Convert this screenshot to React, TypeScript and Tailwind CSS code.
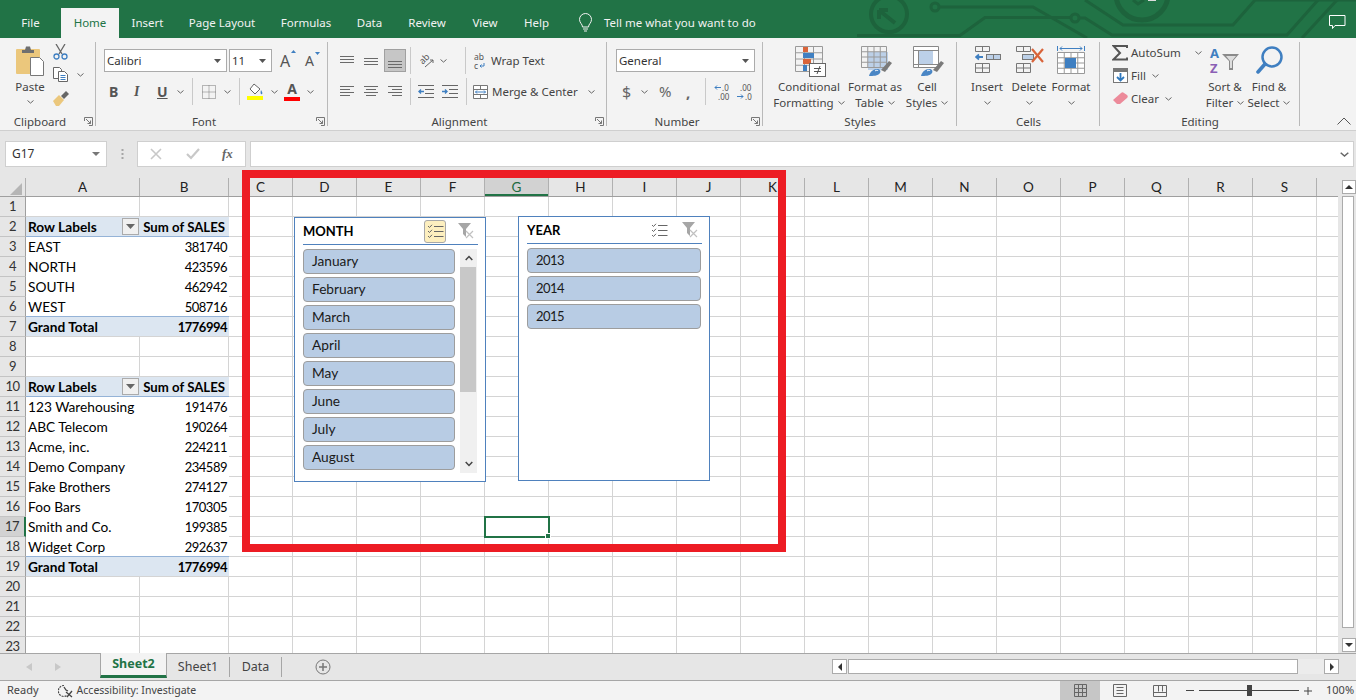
import React from 'react';

const tabs = [
  { label: 'File', w: 'w-[61px]' },
  { label: 'Home', w: 'w-[58px]', active: true },
  { label: 'Insert', w: 'w-[57px]' },
  { label: 'Page Layout', w: 'w-[92px]' },
  { label: 'Formulas', w: 'w-[76px]' },
  { label: 'Data', w: 'w-[51px]' },
  { label: 'Review', w: 'w-[64px]' },
  { label: 'View', w: 'w-[52px]' },
  { label: 'Help', w: 'w-[51px]' },
];

const columns = ['A', 'B', 'C', 'D', 'E', 'F', 'G', 'H', 'I', 'J', 'K', 'L', 'M', 'N', 'O', 'P', 'Q', 'R', 'S', ''];

type PivotRow = { a: string; b: string; kind?: 'head' | 'total' | 'last' | 'body' };

const pivot: Record<number, PivotRow> = {
  2: { a: 'Row Labels', b: 'Sum of SALES', kind: 'head' },
  3: { a: 'EAST', b: '381740' },
  4: { a: 'NORTH', b: '423596' },
  5: { a: 'SOUTH', b: '462942' },
  6: { a: 'WEST', b: '508716', kind: 'last' },
  7: { a: 'Grand Total', b: '1776994', kind: 'total' },
  10: { a: 'Row Labels', b: 'Sum of SALES', kind: 'head' },
  11: { a: '123 Warehousing', b: '191476' },
  12: { a: 'ABC Telecom', b: '190264' },
  13: { a: 'Acme, inc.', b: '224211' },
  14: { a: 'Demo Company', b: '234589' },
  15: { a: 'Fake Brothers', b: '274127' },
  16: { a: 'Foo Bars', b: '170305' },
  17: { a: 'Smith and Co.', b: '199385' },
  18: { a: 'Widget Corp', b: '292637', kind: 'last' },
  19: { a: 'Grand Total', b: '1776994', kind: 'total' },
};

const months = ['January', 'February', 'March', 'April', 'May', 'June', 'July', 'August'];
const years = ['2013', '2014', '2015'];

function colWidth(i: number) {
  if (i === 0) return 'w-[114px]';
  if (i === 1) return 'w-[89px]';
  return 'w-[64px]';
}

function Chev({ className = '' }: { className?: string }) {
  return (
    <svg width="7" height="4" viewBox="0 0 7 4" className={`shrink-0 ${className}`}>
      <path d="M.5.5l3 2.6 3-2.6" fill="none" stroke="#666" />
    </svg>
  );
}

function Launcher() {
  return (
    <svg width="9" height="9" viewBox="0 0 9 9" className="absolute right-[3px] top-[3px]">
      <path d="M.5 4V.5h8v8H5M2 2l4.500 4.500M6.500 3.500v3h-3" fill="none" stroke="#777" />
    </svg>
  );
}

function Group({ w, label, launcher, children }: { w: string; label: string; launcher?: boolean; children: React.ReactNode }) {
  return (
    <div className={`relative flex h-[92px] shrink-0 flex-col ${w}`}>
      <div className="h-[76px]">{children}</div>
      <div className={`relative h-[16px] text-center text-[11.5px] leading-[16px] text-[#444] ${launcher ? 'pr-[16px]' : ''}`}>
        {label}
        {launcher && <Launcher />}
      </div>
      <div className="absolute bottom-[4px] right-0 top-[4px] w-px bg-[#b9b9b9]" />
    </div>
  );
}

function Combo({ w, text, ml }: { w: string; text: string; ml: string }) {
  return (
    <div className={`flex h-[23px] items-center justify-between border border-[#ababab] bg-white pl-[2px] pr-[5px] text-[11.5px] text-[#333] ${w} ${ml}`}>
      <span>{text}</span>
      <svg width="7" height="4" viewBox="0 0 7 4"><path d="M0 0h7L3.500 4z" fill="#555" /></svg>
    </div>
  );
}

function Sep({ ml }: { ml: string }) {
  return <div className={`h-[27px] w-px shrink-0 bg-[#c9c9c9] ${ml}`} />;
}

function Lines({ rows, w = 14, h = 14, ml = '' }: { rows: number[][]; w?: number; h?: number; ml?: string }) {
  return (
    <svg width={w} height={h} viewBox={`0 0 ${w} ${h}`} className={`shrink-0 ${ml}`}>
      {rows.map((r, i) => (
        <path key={i} d={`M${r[0]} ${r[2]}.5H${r[1]}`} stroke="#6a6a6a" />
      ))}
    </svg>
  );
}

function LargeButton({ w, ml = '', lines, chevLine, icon }: { w: string; ml?: string; lines: string[]; chevLine?: boolean; icon: React.ReactNode }) {
  return (
    <div className={`flex shrink-0 flex-col items-center pt-[6px] text-[11.5px] leading-[16px] text-[#444] ${w} ${ml}`}>
      <div className="flex h-[32px] items-start justify-center">{icon}</div>
      <div className="mt-[3px] whitespace-nowrap">{lines[0]}</div>
      <div className="flex h-[16px] items-center gap-[4px] whitespace-nowrap">
        {lines[1] && <span>{lines[1]}</span>}
        {chevLine && <Chev />}
      </div>
    </div>
  );
}

function TableGrid({ x = 0, y = 0, w, h, cols, rows, color = '#777' }: { x?: number; y?: number; w: number; h: number; cols: number; rows: number; color?: string }) {
  const v = Array.from({ length: cols + 1 }, (_, i) => x + (w * i) / cols);
  const r = Array.from({ length: rows + 1 }, (_, i) => y + (h * i) / rows);
  return (
    <g stroke={color} fill="none">
      {v.map((p, i) => <path key={`v${i}`} d={`M${p} ${y}V${y + h}`} />)}
      {r.map((p, i) => <path key={`h${i}`} d={`M${x} ${p}H${x + w}`} />)}
    </g>
  );
}

function Brush() {
  return (
    <g>
      <path d="M20 24l8-9 3 2-7 9z" fill="#7a7a7a" />
      <path d="M8 30c1-4 4-7 8-7 3 0 4 2 3 4-2 3-7 3-11 3z" fill="#4a86c5" />
      <path d="M14 25c1-1 3-1 3 0" stroke="#fff" fill="none" />
    </g>
  );
}

function CheckList({ color = '#666' }: { color?: string }) {
  return (
    <svg width="17" height="15" viewBox="0 0 17 15">
      <path d="M1 2l1.500 1.500L5 .8M1 7l1.500 1.500L5 5.800M1 12l1.500 1.500L5 10.800" fill="none" stroke={color} />
      <path d="M7 2.500h9.500M7 7.500h9.500M7 12.500h9.500" stroke={color} />
    </svg>
  );
}

function FilterClear() {
  return (
    <svg width="17" height="16" viewBox="0 0 17 16">
      <path d="M0 0h13L8 6v8L5 11V6z" fill="#a6a6a6" />
      <path d="M8 8l7 7M15 8l-7 7" stroke="#c0c0c0" strokeWidth="1.200" />
    </svg>
  );
}

function Slicer({ title, items, itemW, top, left, active, scroll, digits }: { title: string; items: string[]; itemW: string; top: string; left: string; active?: boolean; scroll?: boolean; digits?: boolean }) {
  return (
    <div className={`absolute h-[265px] w-[192px] border border-[#4f81bd] bg-white pl-[8px] pr-[7px] ${top} ${left}`}>
      <div className="flex h-[27px] items-center justify-between border-b border-[#4f81bd]">
        <span className="pt-px font-['Lato',sans-serif] text-[13px] font-bold text-black">{title}</span>
        <div className="flex items-center">
          <div className={`flex h-[23px] w-[22px] items-center justify-center rounded-[3px] ${active ? 'border border-[#a8a8a8] bg-[#fdefbf]' : ''}`}>
            <CheckList />
          </div>
          <div className="ml-[12px] mr-[3px]"><FilterClear /></div>
        </div>
      </div>
      <div className="mt-[4px] flex gap-[5px]">
        <div className="flex flex-col gap-[3px]">
          {items.map((m) => (
            <div key={m} className={`flex h-[25px] items-center rounded-[4px] border border-[#9d9d9d] bg-[#b8cce4] pl-[8px] font-['Lato',sans-serif] text-[#1a1a1a] ${itemW} ${digits ? 'text-[13px] tracking-[-0.5px]' : 'text-[13.7px]'}`}>
              {m}
            </div>
          ))}
        </div>
        {scroll && (
          <div className="flex h-[224px] w-[17px] flex-col bg-[#f0f0f0]">
            <div className="flex h-[18px] items-center justify-center">
              <svg width="8" height="6" viewBox="0 0 8 6"><path d="M.7 5L4 1.500 7.300 5" fill="none" stroke="#444" strokeWidth="1.500" /></svg>
            </div>
            <div className="h-[125px] w-[16px] bg-[#c8c8c8]" />
            <div className="flex-1" />
            <div className="flex h-[18px] items-center justify-center">
              <svg width="8" height="6" viewBox="0 0 8 6"><path d="M.7 1L4 4.500 7.300 1" fill="none" stroke="#444" strokeWidth="1.500" /></svg>
            </div>
          </div>
        )}
      </div>
    </div>
  );
}

function Circuit() {
  return (
    <svg width="516" height="38" viewBox="840 0 516 38" className="absolute right-0 top-0">
      <g fill="none" stroke="#1d633c" strokeWidth="3">
        <circle cx="889" cy="14" r="18" strokeWidth="4" />
        <path d="M879 10h9M879 10v9M880 11l15 12" strokeWidth="4" />
        <circle cx="935" cy="7" r="4" />
        <path d="M939 7h94l54 31" />
        <path d="M857 35.500h103l25-18h85" />
        <circle cx="1075" cy="18" r="4" />
        <path d="M1079 18h6l27 17h175l31-35" />
        <path d="M1085 0l38 25h110l22-25h101" />
        <circle cx="1142" cy="-6" r="26" strokeWidth="5" />
        <path d="M1133 0l5 4 6-4" />
        <path d="M1337 0l-35 38" />
      </g>
      <rect x="1148" y="0" width="8" height="1" fill="#ddd" />
    </svg>
  );
}

function Sheet() {
  return (
    <div className="h-[475px] w-[1338px] shrink-0 overflow-hidden bg-white font-['Lato',sans-serif] text-[13.7px] text-black">
      <div className="flex h-[19px] border-b border-[#9f9f9f] bg-[#e6e6e6] text-[13.5px] text-[#222]">
        <div className="flex h-[18px] w-[26px] shrink-0 items-end justify-end border-r border-[#b0b0b0] pb-[1px] pr-[3px]">
          <svg width="12" height="12" viewBox="0 0 12 12"><path d="M12 0v12H0z" fill="#b5b5b5" /></svg>
        </div>
        {columns.map((c, i) => (
          <div
            key={i}
            className={`flex h-[18px] shrink-0 items-center justify-center border-r border-[#b0b0b0] leading-[18px] ${colWidth(i)} ${c === 'G' ? 'bg-[#d2d2d2] text-[#1d6a3f] shadow-[inset_0_-2px_0_#217346]' : ''}`}
          >
            {c}
          </div>
        ))}
      </div>
      {Array.from({ length: 23 }, (_, r) => {
        const n = r + 1;
        const p = pivot[n];
        const shaded = p?.kind === 'head' || p?.kind === 'total';
        const underline = p?.kind === 'head' || p?.kind === 'last';
        const bottom = underline ? 'border-b-[#95b3d7]' : p && !shaded ? 'border-b-white' : 'border-b-[#d4d4d4]';
        return (
          <div key={n} className="flex h-[20px]">
            <div className={`flex w-[26px] shrink-0 items-center justify-center border-b border-r border-b-[#c4c4c4] pt-px text-[13px] tracking-[-0.5px] text-[#333] ${n === 17 ? 'border-r-2 border-r-[#217346] bg-[#d2d2d2] text-[#1d6a3f]' : 'border-r-[#9f9f9f] bg-[#e6e6e6]'}`}>
              {n}
            </div>
            {columns.map((c, i) => {
              if (p && i === 0) {
                return (
                  <div key={i} className={`flex shrink-0 items-center justify-between border-b pl-[2px] pr-px ${colWidth(i)} ${bottom} ${shaded ? 'bg-[#dce6f1] font-bold' : ''}`}>
                    <span className="whitespace-nowrap pt-px">{p.a}</span>
                    {p.kind === 'head' && (
                      <div className="flex h-[17px] w-[17px] items-center justify-center border border-[#ababab] bg-[#f0f0f0]">
                        <svg width="9" height="5" viewBox="0 0 9 5"><path d="M0 0h9L4.500 5z" fill="#666" /></svg>
                      </div>
                    )}
                  </div>
                );
              }
              if (p && i === 1) {
                return (
                  <div key={i} className={`flex shrink-0 items-center justify-end whitespace-nowrap border-b pt-[2px] ${colWidth(i)} ${bottom} ${shaded ? 'bg-[#dce6f1] font-bold' : ''} ${p.kind === 'head' ? 'pr-[4px] text-[13.2px]' : 'pr-[2px] text-[13px] tracking-[-0.5px]'}`}>
                    {p.b}
                  </div>
                );
              }
              return (
                <div key={i} className={`relative shrink-0 border-b border-r border-[#d4d4d4] ${colWidth(i)}`}>
                  {n === 17 && c === 'G' && (
                    <div className="absolute -left-[1px] -top-[1px] z-10 h-[22px] w-[66px] border-2 border-[#217346]">
                      <div className="absolute -bottom-[3px] -right-[3px] h-[6px] w-[6px] border border-white bg-[#217346]" />
                    </div>
                  )}
                </div>
              );
            })}
          </div>
        );
      })}
    </div>
  );
}

export default function App() {
  return (
    <div className="relative flex h-[700px] w-[1356px] flex-col overflow-hidden bg-[#e6e6e6] font-['Noto_Sans',sans-serif]">
      {/* title + tabs */}
      <div className="relative flex h-[38px] shrink-0 items-end bg-[#217346] text-[11.5px] text-[#f2f2f2]">
        <Circuit />
        {tabs.map((t) => (
          <div
            key={t.label}
            className={`relative flex h-[30px] shrink-0 items-center justify-center ${t.w} ${t.active ? 'bg-[#f3f3f3] text-[#217346]' : ''}`}
          >
            {t.label}
          </div>
        ))}
        <div className="relative flex h-[30px] items-center">
          <svg width="15" height="20" viewBox="0 0 15 20" className="ml-[16px]">
            <path d="M4.500 14c0-3-3-4-3-7.500a6 6 0 0 1 12 0C13.500 10 10.500 11 10.500 14zM5 16h5M6 18h3" fill="none" stroke="#f2f2f2" />
          </svg>
          <span className="ml-[11px]">Tell me what you want to do</span>
        </div>
        <svg width="17" height="16" viewBox="0 0 17 16" className="absolute left-[1329px] top-[15px]">
          <path d="M.5.500h15.500v10H6l-2.500 3v-3h-3z" fill="none" stroke="#fff" />
        </svg>
      </div>

      {/* ribbon */}
      <div className="relative flex h-[93px] shrink-0 border-b border-[#cfcfcf] bg-[#f3f3f3] text-[#444]">
        <Group w="w-[96px]" label="Clipboard" launcher>
          <div className="flex">
            <div className="ml-[14px] flex w-[32px] flex-col items-center pt-[7px] text-[11.5px] leading-[16px]">
              <svg width="30" height="32" viewBox="0 0 30 32">
                <rect x="1" y="4" width="24" height="25" rx="1" fill="#ebc77c" />
                <path d="M7 5h3l1-3.500h4l1 3.500h3v3H7z" fill="#6f6f6f" />
                <path d="M15.500 12.500h9l4 4v14h-13z" fill="#fff" stroke="#777" />
              </svg>
              <span className="mt-[2px]">Paste</span>
              <Chev className="mt-[5px]" />
            </div>
            <div className="ml-[7px] flex flex-col pt-[6px]">
              <svg width="15" height="16" viewBox="0 0 15 16">
                <path d="M3 0l6 10M12 0L6 10" stroke="#666" strokeWidth="1.300" />
                <circle cx="3.500" cy="12.500" r="2.500" fill="none" stroke="#3f7fc1" strokeWidth="1.300" />
                <circle cx="11.500" cy="12.500" r="2.500" fill="none" stroke="#3f7fc1" strokeWidth="1.300" />
              </svg>
              <div className="mt-[7px] flex items-center">
                <svg width="16" height="15" viewBox="0 0 16 15">
                  <path d="M.5.500h6l2 2v9h-8z" fill="#fff" stroke="#666" />
                  <path d="M5.500 4.500h6l3 3v7h-9z" fill="#fff" stroke="#666" />
                  <path d="M7.500 8.500h5M7.500 10.500h5M7.500 12.500h5" stroke="#3f7fc1" />
                </svg>
                <Chev className="ml-[8px]" />
              </div>
              <svg width="16" height="15" viewBox="0 0 16 15" className="mt-[9px]">
                <path d="M0 10l6-6 5 5-5 6H3z" fill="#ebc77c" />
                <path d="M8 5l5-5 3 3-5 5z" fill="#666" />
              </svg>
            </div>
          </div>
        </Group>

        <Group w="w-[232px]" label="Font" launcher>
          <div className="pt-[11px]">
            <div className="flex h-[23px] items-center">
              <Combo ml="ml-[8px]" w="w-[123px]" text="Calibri" />
              <Combo ml="ml-[2px]" w="w-[43px]" text="11" />
              <div className="relative ml-[8px] flex w-[14px] items-center text-[16px] text-[#555]">
                A
                <svg width="5" height="3" viewBox="0 0 5 3" className="absolute -right-[2px] top-[1px]"><path d="M0 3h5L2.500 0z" fill="#3f7fc1" /></svg>
              </div>
              <div className="relative ml-[11px] flex w-[13px] items-center text-[14px] text-[#555]">
                A
                <svg width="5" height="3" viewBox="0 0 5 3" className="absolute -right-[2px] top-[2px]"><path d="M0 0h5L2.500 3z" fill="#3f7fc1" /></svg>
              </div>
            </div>
            <div className="mt-[8px] flex h-[23px] items-center text-[14px] text-[#555]">
              <span className="ml-[13px] w-[10px] font-bold">B</span>
              <span className="ml-[15px] w-[8px] font-['Liberation_Serif',serif] font-bold italic">I</span>
              <span className="ml-[15px] w-[10px] font-bold underline">U</span>
              <Chev className="ml-[10px]" />
              <Sep ml="ml-[8px]" />
              <svg width="14" height="14" viewBox="0 0 14 14" className="ml-[9px] shrink-0">
                <path d="M.5.500h13v13H.5zM7 .5v13M.5 7h13" fill="none" stroke="#777" strokeDasharray="1 1" />
              </svg>
              <Chev className="ml-[8px]" />
              <Sep ml="ml-[8px]" />
              <svg width="17" height="17" viewBox="0 0 17 17" className="ml-[7px] shrink-0">
                <path d="M7 1l6 5-5 5-5-5z" fill="#fff" stroke="#666" />
                <path d="M14 7c1 2 2 3 1 4s-2-1-1-4z" fill="#3f7fc1" />
                <rect x="0" y="13" width="16" height="4" fill="#ffff00" />
              </svg>
              <Chev className="ml-[7px]" />
              <div className="ml-[6px] flex w-[16px] flex-col items-center">
                <span className="h-[14px] text-[14px] font-bold leading-[14px]">A</span>
                <div className="mt-[1px] h-[4px] w-[16px] bg-[#ff0000]" />
              </div>
              <Chev className="ml-[7px]" />
            </div>
          </div>
        </Group>

        <Group w="w-[279px]" label="Alignment" launcher>
          <div className="pt-[11px]">
            <div className="flex h-[23px] items-center">
              <Lines ml="ml-[12px]" rows={[[0, 14, 2], [0, 14, 5], [0, 14, 8]]} />
              <Lines ml="ml-[10px]" rows={[[0, 14, 4], [0, 14, 7], [0, 14, 10]]} />
              <div className="ml-[6px] flex h-[23px] w-[22px] items-end justify-center border border-[#a0a0a0] bg-[#c6c6c6] pb-[2px]">
                <Lines rows={[[0, 14, 6], [0, 14, 9], [0, 14, 12]]} />
              </div>
              <Sep ml="ml-[4px]" />
              <div className="relative ml-[7px] h-[16px] w-[16px] shrink-0">
                <span className="absolute left-[1px] top-[1px] origin-center -rotate-45 text-[9px] leading-[10px] text-[#555]">ab</span>
                <svg width="16" height="16" viewBox="0 0 16 16" className="absolute left-0 top-0">
                  <path d="M7 14l8-7M15 7v3M15 7h-3" fill="none" stroke="#666" />
                </svg>
              </div>
              <Chev className="ml-[6px]" />
              <Sep ml="ml-[18px]" />
              <div className="ml-[8px] flex w-[13px] flex-col whitespace-nowrap text-[8.5px] leading-[9px] text-[#555]">
                <span>ab</span>
                <span className="flex items-center">
                  c
                  <svg width="6" height="5" viewBox="0 0 6 5" className="ml-px"><path d="M5 0v3H1M2.500 1.500L1 3l1.500 1.500" fill="none" stroke="#3f7fc1" /></svg>
                </span>
              </div>
              <span className="ml-[4px] text-[11.5px]">Wrap Text</span>
            </div>
            <div className="mt-[8px] flex h-[23px] items-center">
              <Lines ml="ml-[12px]" rows={[[0, 14, 1], [0, 10, 4], [0, 14, 7], [0, 10, 10]]} />
              <Lines ml="ml-[10px]" rows={[[0, 14, 1], [2, 12, 4], [0, 14, 7], [2, 12, 10]]} />
              <Lines ml="ml-[10px]" rows={[[0, 14, 1], [4, 14, 4], [0, 14, 7], [4, 14, 10]]} />
              <Sep ml="ml-[8px]" />
              <svg width="16" height="13" viewBox="0 0 16 13" className="ml-[7px] shrink-0">
                <path d="M0 .5h16M7 4.500h9M7 8.500h9M0 12.500h16" stroke="#666" />
                <path d="M6 6.500H1M3 4.500l-2 2 2 2" fill="none" stroke="#3f7fc1" strokeWidth="1.400" />
              </svg>
              <svg width="16" height="13" viewBox="0 0 16 13" className="ml-[8px] shrink-0">
                <path d="M0 .5h16M7 4.500h9M7 8.500h9M0 12.500h16" stroke="#666" />
                <path d="M0 6.500h5M3 4.500l2 2-2 2" fill="none" stroke="#3f7fc1" strokeWidth="1.400" />
              </svg>
              <Sep ml="ml-[8px]" />
              <svg width="15" height="14" viewBox="0 0 15 14" className="ml-[6px] shrink-0">
                <path d="M.5.500h14v13H.5zM.5 4.500h14M.5 9.500h14M7.500 .5v4M7.500 9.500v4" fill="#fff" stroke="#777" />
                <path d="M2.500 7h10M4 5.500L2.500 7 4 8.500M11 5.500L12.500 7 11 8.500" fill="none" stroke="#3f7fc1" />
              </svg>
              <span className="ml-[4px] whitespace-nowrap text-[11.5px]">Merge &amp; Center</span>
              <Chev className="ml-[10px]" />
            </div>
          </div>
        </Group>

        <Group w="w-[156px]" label="Number" launcher>
          <div className="pt-[11px]">
            <Combo ml="ml-[9px]" w="w-[139px]" text="General" />
            <div className="mt-[8px] flex h-[23px] items-center text-[#666]">
              <span className="ml-[15px] w-[10px] text-[16px]">$</span>
              <Chev className="ml-[9px]" />
              <span className="ml-[11px] w-[15px] text-[15px]">%</span>
              <span className="ml-[12px] w-[6px] text-[15px] font-bold leading-[12px]">,</span>
              <Sep ml="ml-[13px]" />
              <div className="ml-[8px] flex w-[17px] flex-col whitespace-nowrap text-[8px] leading-[9px] text-[#555]">
                <span className="flex items-center">
                  <svg width="7" height="5" viewBox="0 0 7 5" className="mr-px"><path d="M7 2.500H1M3 .5L1 2.500l2 2" fill="none" stroke="#3f7fc1" /></svg>
                  .0
                </span>
                <span className="pl-[4px]">.00</span>
              </div>
              <div className="ml-[6px] flex w-[16px] flex-col whitespace-nowrap text-[8px] leading-[9px] text-[#555]">
                <span className="pl-[3px]">.00</span>
                <span className="flex items-center">
                  <svg width="7" height="5" viewBox="0 0 7 5" className="mr-px"><path d="M0 2.500h6M4 .5l2 2-2 2" fill="none" stroke="#3f7fc1" /></svg>
                  .0
                </span>
              </div>
            </div>
          </div>
        </Group>

        <Group w="w-[194px]" label="Styles">
          <div className="flex">
            <LargeButton
              ml="ml-[10px]"
              w="w-[72px]"
              lines={['Conditional', 'Formatting']}
              chevLine
              icon={
                <svg width="32" height="31" viewBox="0 0 32 31" className="ml-[3px] mt-[2px]">
                  <TableGrid w={27} h={25} cols={3} rows={4} x={0.5} y={0.5} color="#9a9a9a" />
                  <rect x="8" y="1" width="5" height="5" fill="#d9643a" />
                  <rect x="8" y="7" width="11" height="5" fill="#3f7fc1" />
                  <rect x="8" y="13" width="8" height="5" fill="#d9643a" />
                  <rect x="8" y="19" width="4" height="6" fill="#3f7fc1" />
                  <rect x="14.500" y="17.500" width="16" height="13" fill="#fff" stroke="#666" />
                  <path d="M19 22.500h7M19 25.500h7M25 20l-3 8" stroke="#555" />
                </svg>
              }
            />
            <LargeButton
              ml="ml-[3px]"
              w="w-[54px]"
              lines={['Format as', 'Table']}
              chevLine
              icon={
                <svg width="32" height="31" viewBox="0 0 32 31" className="ml-[3px] mt-[2px]">
                  <rect x="7" y="6" width="20" height="18" fill="#bcd0e8" />
                  <TableGrid w={25} h={21} cols={4} rows={4} x={0.5} y={0.5} color="#999" />
                  <Brush />
                </svg>
              }
            />
            <LargeButton
              w="w-[50px]"
              lines={['Cell', 'Styles']}
              chevLine
              icon={
                <svg width="32" height="31" viewBox="0 0 32 31" className="ml-[4px] mt-[2px]">
                  <path d="M.5.500h25v21H.5zM.5 4.500h25M5.500 4.500v17M.5 18.500h25" fill="#fff" stroke="#888" />
                  <rect x="6" y="5" width="14" height="13" fill="#bcd0e8" />
                  <Brush />
                </svg>
              }
            />
          </div>
        </Group>

        <Group w="w-[143px]" label="Cells">
          <div className="flex">
            <LargeButton
              ml="ml-[9px]"
              w="w-[42px]"
              lines={['Insert', '']}
              chevLine
              icon={
                <svg width="28" height="28" viewBox="0 0 28 28" className="ml-[4px] mt-[2px]">
                  <TableGrid w={14} h={5} cols={2} rows={1} x={0.5} y={0.5} />
                  <TableGrid w={14} h={9} cols={2} rows={2} x={0.5} y={17.500} />
                  <path d="M1 11h7M4 8.500L1 11l3 2.500" fill="none" stroke="#3f7fc1" strokeWidth="1.800" />
                  <rect x="11.500" y="8.500" width="14" height="5" fill="#bcd0e8" stroke="#777" />
                  <path d="M18.500 8.500v5" stroke="#777" />
                </svg>
              }
            />
            <LargeButton
              w="w-[42px]"
              lines={['Delete', '']}
              chevLine
              icon={
                <svg width="30" height="28" viewBox="0 0 30 28" className="ml-[4px] mt-[2px]">
                  <TableGrid w={14} h={5} cols={2} rows={1} x={0.5} y={0.5} />
                  <TableGrid w={14} h={9} cols={2} rows={2} x={0.5} y={17.500} />
                  <rect x="6.500" y="8.500" width="11" height="5" fill="#bcd0e8" stroke="#777" />
                  <path d="M16 3l11 13M27 3L16 16" stroke="#d9643a" strokeWidth="2.200" />
                </svg>
              }
            />
            <LargeButton
              w="w-[42px]"
              lines={['Format', '']}
              chevLine
              icon={
                <svg width="28" height="30" viewBox="0 0 28 30" className="mt-[1px]">
                  <path d="M.5 1v5M27.500 1v5M3 3.500h22M5 1.500l-2 2 2 2M23 1.500l2 2-2 2" fill="none" stroke="#3f7fc1" />
                  <rect x="0.500" y="7.500" width="27" height="21" fill="#fff" />
                  <TableGrid w={27} h={21} cols={4} rows={4} x={0.5} y={7.500} color="#999" />
                  <rect x="8" y="13" width="11" height="10" fill="#3f7fc1" />
                </svg>
              }
            />
          </div>
        </Group>

        <Group w="w-[200px]" label="Editing">
          <div className="flex">
            <div className="ml-[12px] flex w-[91px] flex-col pt-[3px] text-[11.5px]">
              <div className="flex h-[23px] items-center">
                <svg width="16" height="16" viewBox="0 0 16 16" className="shrink-0">
                  <path d="M15 3V1H1.500L8 8l-6.500 6.500H15v-2" fill="none" stroke="#555" strokeWidth="2" />
                </svg>
                <span className="ml-[3px]">AutoSum</span>
                <Chev className="ml-[14px]" />
              </div>
              <div className="flex h-[23px] items-center">
                <svg width="15" height="15" viewBox="0 0 15 15" className="ml-px shrink-0">
                  <rect x="0.500" y="0.500" width="14" height="14" fill="#fff" stroke="#777" />
                  <rect x="1" y="1" width="13" height="3" fill="#777" />
                  <path d="M7.500 5v7M4 9l3.500 3.500L11 9" fill="none" stroke="#2f78bd" strokeWidth="1.800" />
                </svg>
                <span className="ml-[3px]">Fill</span>
                <Chev className="ml-[6px]" />
              </div>
              <div className="flex h-[23px] items-center">
                <svg width="15" height="13" viewBox="0 0 15 13" className="ml-px shrink-0">
                  <path d="M0 8l8-7c1-1 2-1 3 0l3 2c1 1 1 2 0 3l-7 6H4z" fill="#ec8a9a" />
                </svg>
                <span className="ml-[3px]">Clear</span>
                <Chev className="ml-[6px]" />
              </div>
            </div>
            <LargeButton
              w="w-[44px]"
              lines={['Sort &', 'Filter']}
              chevLine
              icon={
                <div className="flex h-[31px] w-[30px] font-bold">
                  <div className="flex w-[12px] flex-col pt-[2px] text-[13px] leading-[15px]">
                    <span className="text-[#3f7fc1]">A</span>
                    <span className="text-[#8b5fb5]">Z</span>
                  </div>
                  <svg width="18" height="17" viewBox="0 0 18 17" className="mt-[10px]">
                    <path d="M0 0h17l-6 7v9H7V7z" fill="#8a8a8a" />
                    <path d="M4 2h10l-4 5v7H8V7z" fill="#ddd" />
                  </svg>
                </div>
              }
            />
            <LargeButton
              w="w-[44px]"
              lines={['Find &', 'Select']}
              chevLine
              icon={
                <svg width="30" height="30" viewBox="0 0 30 30">
                  <circle cx="18" cy="13" r="9.500" fill="none" stroke="#3f7fc1" strokeWidth="2.500" />
                  <path d="M11 20l-7 8" stroke="#3f7fc1" strokeWidth="3.500" strokeLinecap="round" />
                </svg>
              }
            />
          </div>
        </Group>
        <svg width="14" height="8" viewBox="0 0 14 8" className="absolute left-[1337px] top-[79px]">
          <path d="M.5 7.500L7 1l6.500 6.500" fill="none" stroke="#555" />
        </svg>
      </div>

      {/* formula bar */}
      <div className="flex h-[47px] shrink-0 items-center bg-[#e6e6e6] pb-[1px]">
        <div className="ml-[5px] flex h-[26px] w-[102px] items-center justify-between border border-[#cfcfcf] bg-white pl-[6px] pr-[6px] text-[12px] text-[#333]">
          G17
          <svg width="8" height="4" viewBox="0 0 8 4"><path d="M0 0h8L4 4z" fill="#777" /></svg>
        </div>
        <svg width="3" height="12" viewBox="0 0 3 12" className="ml-[14px]">
          <path d="M1.500 1v2M1.500 5v2M1.500 9v2" stroke="#a6a6a6" strokeWidth="2" />
        </svg>
        <div className="ml-[13px] flex h-[26px] w-[109px] items-center border border-[#cfcfcf] bg-white">
          <svg width="12" height="12" viewBox="0 0 12 12" className="ml-[12px]"><path d="M1 1l10 10M11 1L1 11" stroke="#c8c8c8" strokeWidth="1.600" /></svg>
          <svg width="14" height="12" viewBox="0 0 14 12" className="ml-[24px]"><path d="M1 6l4 4 8-9" fill="none" stroke="#c8c8c8" strokeWidth="2.200" /></svg>
          <span className="ml-[22px] font-['Liberation_Serif',serif] text-[13px] font-bold italic text-[#666]">fx</span>
        </div>
        <div className="ml-[4px] flex h-[26px] w-[1104px] items-center justify-end border border-[#cfcfcf] bg-white pr-[4px]">
          <svg width="9" height="5" viewBox="0 0 9 5"><path d="M.7.700L4.500 4 8.300.7" fill="none" stroke="#666" strokeWidth="1.500" /></svg>
        </div>
      </div>

      {/* grid + scrollbar */}
      <div className="flex h-[475px] shrink-0">
        <Sheet />
        <div className="flex w-[18px] flex-col bg-[#e6e6e6] pl-[4px] pt-[2px]">
          <div className="flex h-[14px] w-[14px] items-center justify-center border border-[#ababab] bg-white">
            <svg width="8" height="4" viewBox="0 0 8 4"><path d="M0 4h8L4 0z" fill="#333" /></svg>
          </div>
          <div className="mt-[2px] h-[432px] w-[12px] border border-[#ababab] bg-white" />
          <div className="flex-1" />
          <div className="mb-px flex h-[14px] w-[14px] items-center justify-center border border-[#ababab] bg-white">
            <svg width="8" height="4" viewBox="0 0 8 4"><path d="M0 0h8L4 4z" fill="#333" /></svg>
          </div>
        </div>
      </div>

      {/* sheet tabs */}
      <div className="flex h-[28px] shrink-0 items-start border-b border-t border-[#a6a6a6] bg-[#e6e6e6] text-[12.5px] text-[#444]">
        <svg width="6" height="8" viewBox="0 0 6 8" className="ml-[26px] mt-[9px]"><path d="M6 0v8L0 4z" fill="#c8c8c8" /></svg>
        <svg width="6" height="8" viewBox="0 0 6 8" className="ml-[23px] mt-[9px]"><path d="M0 0v8l6-4z" fill="#c8c8c8" /></svg>
        <div className="-mt-px ml-[39px] flex h-[25px] w-[67px] items-center justify-center border-x border-b-[3px] border-x-[#a6a6a6] border-b-[#217346] bg-[#f3f3f3] font-bold text-[#217346]">
          Sheet2
        </div>
        <div className="mt-[3px] flex h-[20px] w-[63px] items-center justify-center border-r border-[#a6a6a6]">Sheet1</div>
        <div className="mt-[3px] flex h-[20px] w-[52px] items-center justify-center border-r border-[#a6a6a6]">Data</div>
        <svg width="16" height="16" viewBox="0 0 16 16" className="ml-[33px] mt-[5px]">
          <circle cx="8" cy="8" r="7" fill="none" stroke="#777" />
          <path d="M8 4v8M4 8h8" stroke="#777" strokeWidth="1.500" />
        </svg>
        <div className="ml-[501px] mt-[5px] flex h-[15px] items-stretch">
          <div className="flex w-[15px] items-center justify-center border border-[#ababab] bg-white">
            <svg width="4" height="8" viewBox="0 0 4 8"><path d="M4 0v8L0 4z" fill="#333" /></svg>
          </div>
          <div className="ml-px w-[450px] border border-[#ababab] bg-white" />
          <div className="w-[26px] bg-[#ececec]" />
          <div className="flex w-[15px] items-center justify-center border border-[#ababab] bg-white">
            <svg width="4" height="8" viewBox="0 0 4 8"><path d="M0 0v8l4-4z" fill="#333" /></svg>
          </div>
        </div>
      </div>

      {/* status bar */}
      <div className="flex h-[19px] flex-1 items-center bg-[#f3f3f3] text-[11px] text-[#444]">
        <span className="ml-[7px]">Ready</span>
        <svg width="16" height="14" viewBox="0 0 16 14" className="ml-[19px] shrink-0">
          <path d="M6 1.500a5.500 5.500 0 1 0 3 10" fill="none" stroke="#444" strokeDasharray="2 1" strokeWidth="1.200" />
          <path d="M6 3l2 3 2 1M8 8l6 5M14 7l-5 6" fill="none" stroke="#444" strokeWidth="1.300" />
        </svg>
        <span className="ml-[3px] whitespace-nowrap text-[10.5px]">Accessibility: Investigate</span>
        <div className="ml-auto flex h-[19px] w-[296px] shrink-0 items-center">
          <div className="flex h-[19px] w-[40px] items-center justify-center bg-[#c6c6c6]">
            <svg width="13" height="13" viewBox="0 0 13 13"><path d="M.5.500h12v12H.5zM4.500 .5v12M8.500 .5v12M.5 4.500h12M.5 8.500h12" fill="none" stroke="#666" /></svg>
          </div>
          <svg width="14" height="13" viewBox="0 0 14 13" className="ml-[13px]"><path d="M.5.500h13v12H.5zM3.500 3.500h7M3.500 6.500h7M3.500 9.500h7" fill="none" stroke="#666" /></svg>
          <svg width="14" height="12" viewBox="0 0 14 12" className="ml-[26px]"><path d="M.5.500h13v11H.5zM5.500 .5v6M9.500 .5v6M.5 7.500h13" fill="none" stroke="#666" /></svg>
          <div className="ml-[19px] h-px w-[8px] bg-[#444]" />
          <div className="relative ml-[5px] h-px w-[100px] bg-[#444]">
            <div className="absolute left-[48px] top-[-5px] h-[11px] w-[5px] bg-[#444]" />
          </div>
          <svg width="8" height="8" viewBox="0 0 8 8" className="ml-[5px]"><path d="M4 0v8M0 4h8" stroke="#444" /></svg>
          <span className="ml-[14px]">100%</span>
        </div>
      </div>

      {/* floating objects over the sheet */}
      <Slicer title="MONTH" items={months} itemW="w-[152px]" top="top-[217px]" left="left-[294px]" active scroll />
      <Slicer title="YEAR" items={years} itemW="w-[174px]" top="top-[216px]" left="left-[518px]" digits />
      <div className="pointer-events-none absolute left-[242px] top-[170px] h-[382px] w-[544px] border-[8px] border-[#ed1c24]" />
    </div>
  );
}
